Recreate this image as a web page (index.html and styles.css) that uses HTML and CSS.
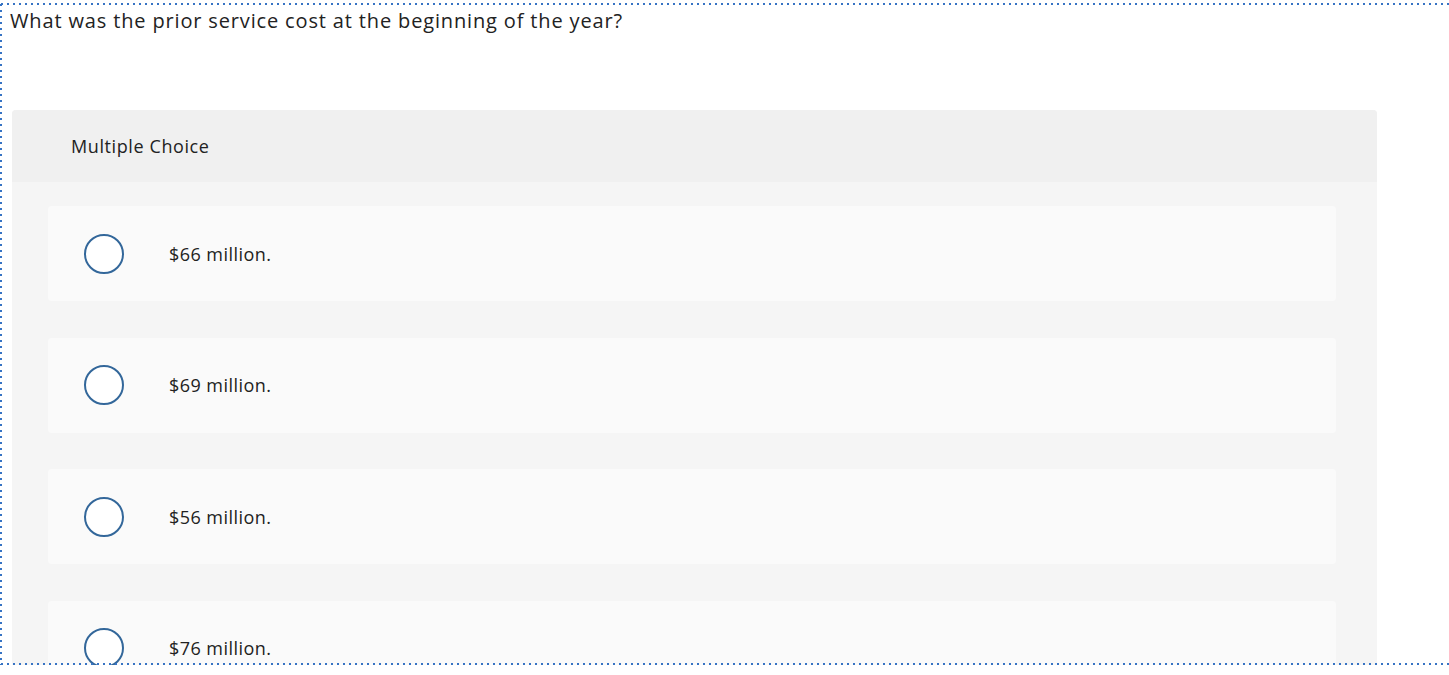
FILE: index.html
```html
<!DOCTYPE html>
<html lang="en">
<head>
<meta charset="utf-8">
<title>Multiple Choice</title>
<link rel="stylesheet" href="styles.css">
</head>
<body>
<div class="frame">
  <p class="question">What was the prior service cost at the beginning of the year?</p>
  <section class="card">
    <header class="card-head">Multiple Choice</header>
    <div class="card-body">
      <label class="option"><span class="radio"></span><span class="option-text">$66 million.</span></label>
      <label class="option"><span class="radio"></span><span class="option-text">$69 million.</span></label>
      <label class="option"><span class="radio"></span><span class="option-text">$56 million.</span></label>
      <label class="option"><span class="radio"></span><span class="option-text">$76 million.</span></label>
    </div>
  </section>
</div>
</body>
</html>
```

FILE: styles.css
```css
html, body {
  margin: 0;
  padding: 0;
  background: #ffffff;
  overflow: hidden;
}

body {
  font-family: "Open Sans", "Lato", sans-serif;
  color: #222222;
}

.frame {
  position: relative;
  margin-top: 3px;
  height: 662px;
  overflow: hidden;
  padding-left: 10px;
  box-sizing: border-box;
}

.frame::after {
  content: "";
  position: absolute;
  inset: 0;
  pointer-events: none;
  background-image:
    repeating-linear-gradient(to right, #3673c4 0 2px, transparent 2px 6px),
    repeating-linear-gradient(to bottom, #3673c4 0 2px, transparent 2px 6px),
    repeating-linear-gradient(to right, #3673c4 0 2px, transparent 2px 6px);
  background-size: 100% 2px, 2px 100%, 100% 2px;
  background-position: 1px 0, 0 1px, 1px 100%;
  background-repeat: no-repeat;
}

.question {
  margin: 0;
  padding-top: 4px;
  font-size: 20px;
  letter-spacing: 0.85px;
  line-height: 28px;
  color: #222222;
}

.card {
  margin-top: 75px;
  margin-left: 2px;
  width: 1365px;
  border-radius: 4px;
  background: #f5f5f5;
  overflow: hidden;
}

.card-head {
  height: 72px;
  background: #f0f0f0;
  display: flex;
  align-items: center;
  padding-left: 59px;
  font-size: 18px;
  letter-spacing: 0.6px;
  color: #222222;
}

.card-body {
  padding: 24px 41px 40px 36px;
  display: flex;
  flex-direction: column;
  gap: 36.5px;
}

.option {
  height: 95px;
  background: #fafafa;
  border-radius: 4px;
  display: flex;
  align-items: center;
  padding-left: 36px;
}

.radio {
  width: 36px;
  height: 36px;
  border: 2px solid #33679a;
  border-radius: 50%;
  background: #ffffff;
  flex: none;
}

.option-text {
  margin-left: 45px;
  font-size: 18px;
  letter-spacing: 0.45px;
  color: #222222;
}
```
